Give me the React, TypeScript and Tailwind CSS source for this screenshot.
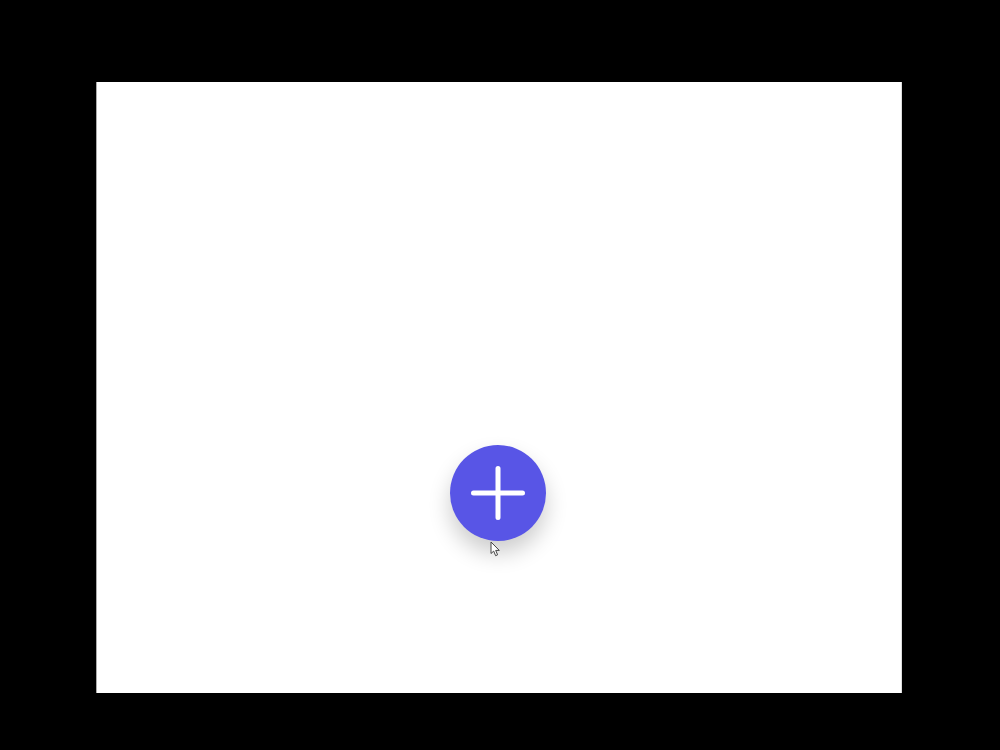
import React from 'react';

function Cursor() {
  return (
    <svg
      className="absolute left-[393px] top-[459px]"
      width="11"
      height="16"
      viewBox="0 0 11 16"
      fill="none"
    >
      <path
        d="M1 1v11.5l2.7-2.4 1.9 4.6 2-.9-1.9-4.4h3.6z"
        fill="#fff"
        stroke="#444"
        strokeWidth="1"
        strokeLinejoin="round"
      />
    </svg>
  );
}

export default function App() {
  return (
    <div className="h-[750px] w-[1000px] overflow-hidden bg-black pl-[96px] pt-[82px]">
      <div className="relative h-[611px] w-[806px] border-l border-r border-l-[#aaaaaa] border-r-[#dddddd] bg-white pl-[353px] pt-[363px]">
        <button className="flex h-[96px] w-[95.6px] items-center justify-center rounded-full bg-[#5855e6] shadow-[0_12px_22px_rgba(0,0,0,0.2)]">
          <svg width="56" height="56" viewBox="0 0 56 56" fill="none">
            <path
              d="M28 3.5v49M3.5 28h49"
              stroke="#fff"
              strokeWidth="5"
              strokeLinecap="round"
            />
          </svg>
        </button>
        <Cursor />
      </div>
    </div>
  );
}
